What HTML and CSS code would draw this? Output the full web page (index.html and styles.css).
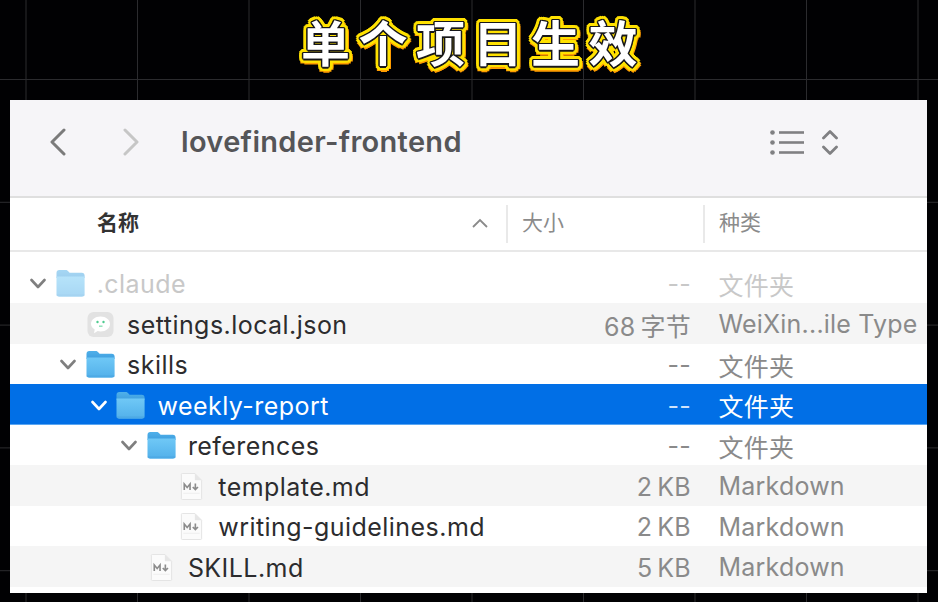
FILE: index.html
```html
<!DOCTYPE html>
<html lang="zh-CN">
<head>
    <meta charset="UTF-8">
    <title>单个项目生效</title>
    <link rel="stylesheet" href="styles.css">
</head>
<body>
    <svg class="defs" width="0" height="0">
        <defs>
            <linearGradient id="folderBack" x1="0" y1="0" x2="0" y2="1">
                <stop offset="0" stop-color="#4fb0ea"/>
                <stop offset="1" stop-color="#3f9fdf"/>
            </linearGradient>
            <linearGradient id="folderFront" x1="0" y1="0" x2="0" y2="1">
                <stop offset="0" stop-color="#6fc8f6"/>
                <stop offset="1" stop-color="#52b0ea"/>
            </linearGradient>
            <symbol id="folder" viewBox="0 0 29 27">
                <path d="M0.5 3C0.5 1.2 1.6 0 3.2 0H9.6C10.8 0 11.4 0.4 12.2 1.2L13.6 2.8H25.8C27.6 2.8 28.6 3.9 28.6 5.6V8H0.5Z" fill="url(#folderBack)"/>
                <path d="M0.5 6.6H28.6V24C28.6 25.8 27.6 26.8 25.8 26.8H3.2C1.6 26.8 0.5 25.8 0.5 24Z" fill="url(#folderFront)"/>
                <rect x="0.5" y="24.6" width="28.1" height="1" fill="#3f9ad8" opacity="0.55"/>
            </symbol>
            <symbol id="mdfile" viewBox="0 0 23 28">
                <path d="M1 1.5C1 0.9 1.4 0.5 2 0.5H15L22 7.5V26.5C22 27.1 21.6 27.5 21 27.5H2C1.4 27.5 1 27.1 1 26.5Z" fill="#fbfbfb" stroke="#e3e3e3"/>
                <path d="M15 0.5V7.5H22Z" fill="#e6e6e6"/>
                <path d="M4 17.5V11.5L7 15L10 11.5V17.5" fill="none" stroke="#8c8c8c" stroke-width="1.7"/>
                <path d="M15.5 11V17M12.8 14.5L15.5 17.3L18.2 14.5" fill="none" stroke="#8c8c8c" stroke-width="1.7"/>
                <rect x="3" y="20.5" width="17" height="1" fill="#eeeeee"/>
            </symbol>
            <symbol id="chevron" viewBox="0 0 16 11">
                <path d="M1.5 2L8 9L14.5 2" fill="none" stroke="currentColor" stroke-width="2.6" stroke-linecap="round" stroke-linejoin="round"/>
            </symbol>
        </defs>
    </svg>

    <h1 class="banner">单个项目生效</h1>

    <div class="finder">
        <div class="toolbar">
            <svg class="nav back" width="17" height="28" viewBox="0 0 17 28"><path d="M15 2L3 14L15 26"/></svg>
            <svg class="nav forward" width="17" height="28" viewBox="0 0 17 28"><path d="M2 2L14 14L2 26"/></svg>
            <div class="path-title">lovefinder-frontend</div>
            <svg class="view-list" width="34" height="25" viewBox="0 0 34 25">
                <circle cx="2.5" cy="2.5" r="2.3"/>
                <circle cx="2.5" cy="12.5" r="2.3"/>
                <circle cx="2.5" cy="22.5" r="2.3"/>
                <rect x="9" y="1.2" width="25" height="2.6"/>
                <rect x="9" y="11.2" width="25" height="2.6"/>
                <rect x="9" y="21.2" width="25" height="2.6"/>
            </svg>
            <svg class="view-sort" width="16" height="25" viewBox="0 0 16 25"><path d="M1.5 8L8 1.5L14.5 8M1.5 17L8 23.5L14.5 17"/></svg>
        </div>

        <div class="columns">
            <div class="col-name">
                <span>名称</span>
                <svg class="sort-arrow" width="16" height="10" viewBox="0 0 16 10"><path d="M1 9L8 2L15 9"/></svg>
            </div>
            <div class="col-head">大小</div>
            <div class="col-head">种类</div>
        </div>

        <div class="file-list">
            <div class="row dimmed level-0">
                <div class="name">
                    <svg class="twisty"><use href="#chevron"/></svg>
                    <svg class="icon"><use href="#folder"/></svg>
                    <span>.claude</span>
                </div>
                <div class="size">--</div>
                <div class="kind">文件夹</div>
            </div>
            <div class="row striped level-1">
                <div class="name">
                    <span class="twisty"></span>
                    <svg class="icon" viewBox="0 0 29 27">
                        <rect x="1.5" y="1" width="26" height="25" rx="6" fill="#e2e2e2"/>
                        <path d="M14.5 5.5C20 5.5 24 8.8 24 13C24 17.2 20 20.5 14.5 20.5C13.5 20.5 12.6 20.4 11.7 20.1L8 22.2L8.7 18.4C6.3 17 5 15.1 5 13C5 8.8 9 5.5 14.5 5.5Z" fill="#ffffff"/>
                        <circle cx="11.5" cy="11" r="1.2" fill="#4ecb8f"/>
                        <circle cx="17.5" cy="11" r="1.2" fill="#4ecb8f"/>
                        <rect x="13" y="14.6" width="3.5" height="1.1" fill="#6ad6a2"/>
                    </svg>
                    <span>settings.local.json</span>
                </div>
                <div class="size">68 字节</div>
                <div class="kind">WeiXin...ile Type</div>
            </div>
            <div class="row level-1">
                <div class="name">
                    <svg class="twisty"><use href="#chevron"/></svg>
                    <svg class="icon"><use href="#folder"/></svg>
                    <span>skills</span>
                </div>
                <div class="size">--</div>
                <div class="kind">文件夹</div>
            </div>
            <div class="row selected level-2">
                <div class="name">
                    <svg class="twisty"><use href="#chevron"/></svg>
                    <svg class="icon"><use href="#folder"/></svg>
                    <span>weekly-report</span>
                </div>
                <div class="size">--</div>
                <div class="kind">文件夹</div>
            </div>
            <div class="row level-3">
                <div class="name">
                    <svg class="twisty"><use href="#chevron"/></svg>
                    <svg class="icon"><use href="#folder"/></svg>
                    <span>references</span>
                </div>
                <div class="size">--</div>
                <div class="kind">文件夹</div>
            </div>
            <div class="row striped level-4">
                <div class="name">
                    <span class="twisty"></span>
                    <svg class="icon"><use href="#mdfile"/></svg>
                    <span>template.md</span>
                </div>
                <div class="size">2 KB</div>
                <div class="kind">Markdown</div>
            </div>
            <div class="row level-4">
                <div class="name">
                    <span class="twisty"></span>
                    <svg class="icon"><use href="#mdfile"/></svg>
                    <span>writing-guidelines.md</span>
                </div>
                <div class="size">2 KB</div>
                <div class="kind">Markdown</div>
            </div>
            <div class="row striped level-3">
                <div class="name">
                    <span class="twisty"></span>
                    <svg class="icon"><use href="#mdfile"/></svg>
                    <span>SKILL.md</span>
                </div>
                <div class="size">5 KB</div>
                <div class="kind">Markdown</div>
            </div>
        </div>
    </div>
</body>
</html>
```

FILE: styles.css
```css
* {
    margin: 0;
    padding: 0;
    box-sizing: border-box;
}

body {
    width: 938px;
    height: 602px;
    overflow: hidden;
    font-family: Inter, "Noto Sans CJK SC", sans-serif;
    background-color: #010103;
    background-image:
        linear-gradient(to right, #2b2b2e 1.2px, transparent 1.2px),
        linear-gradient(to bottom, #2b2b2e 1.2px, transparent 1.2px);
    background-size: 111.5px 122.8px;
    background-position: 25.5px 79px;
}

.defs {
    position: absolute;
}

.banner {
    height: 100px;
    padding: 15px 0 0 9px;
    text-align: center;
    font-family: "Noto Sans CJK SC", sans-serif;
    font-size: 49px;
    font-weight: 700;
    line-height: 52px;
    letter-spacing: 8.5px;
    color: #ffffff;
    /* dark ring first so it sits on top, then yellow, then the orange drop */
    text-shadow:
        1.5px 0 0 #17171a, -1.5px 0 0 #17171a, 0 1.5px 0 #17171a, 0 -1.5px 0 #17171a,
        1px 1px 0 #17171a, -1px 1px 0 #17171a, 1px -1px 0 #17171a, -1px -1px 0 #17171a,
        4px 0 0 #ffe100, -4px 0 0 #ffe100, 0 4px 0 #ffe100, 0 -4px 0 #ffe100,
        3px 3px 0 #ffe100, -3px 3px 0 #ffe100, 3px -3px 0 #ffe100, -3px -3px 0 #ffe100,
        2px 4px 0 #ffe100, -2px 4px 0 #ffe100, 4px 2px 0 #ffe100, -4px 2px 0 #ffe100,
        2px -4px 0 #ffe100, -2px -4px 0 #ffe100, 4px -2px 0 #ffe100, -4px -2px 0 #ffe100,
        5px 3px 0 #ff9d00, -3px 5px 0 #ff9d00, 3px 5px 0 #ff9d00, 1px 6px 0 #ff9d00, 5px 1px 0 #ff9d00;
}

.finder {
    width: 916.5px;
    height: 493px;
    margin-left: 10px;
    background: #ffffff;
}

.toolbar {
    height: 98px;
    padding: 0 89px 12px 39px;
    display: flex;
    align-items: center;
    background: #f6f5f8;
    border-bottom: 2px solid #dfdfdf;
}

.nav {
    fill: none;
    stroke-width: 3;
    stroke-linecap: round;
    stroke-linejoin: round;
}

.back {
    stroke: #7b7b7b;
    margin-right: 57px;
}

.forward {
    stroke: #c6c6c6;
    margin-right: 41px;
}

.path-title {
    flex: 1;
    margin-bottom: 1px;
    font-size: 29px;
    font-weight: 600;
    letter-spacing: 0.32px;
    color: #555558;
}

.view-list {
    fill: #808083;
    margin-right: 18px;
}

.view-sort {
    fill: none;
    stroke: #808083;
    stroke-width: 2.8;
    stroke-linecap: round;
    stroke-linejoin: round;
}

.columns {
    height: 54px;
    display: grid;
    grid-template-columns: 496px 197px 1fr;
    align-items: center;
    border-bottom: 2px solid #e8e8e8;
}

.col-name {
    padding: 0 18px 6px 87px;
    display: flex;
    justify-content: space-between;
    align-items: center;
    font-family: "Noto Sans CJK SC", sans-serif;
    font-size: 21px;
    font-weight: 700;
    color: #333333;
}

.sort-arrow {
    margin-top: 4px;
    fill: none;
    stroke: #8a8a8a;
    stroke-width: 1.8;
}

.col-head {
    height: 38px;
    padding-left: 14px;
    border-left: 2px solid #e9e9e9;
    font-family: "Noto Sans CJK SC", sans-serif;
    font-size: 21px;
    line-height: 32px;
    color: #8b8b8b;
}

.file-list {
    padding-top: 10.8px;
}

.row {
    height: 40.5px;
    padding-top: 2px;
    display: grid;
    grid-template-columns: 496px 197px 1fr;
    align-items: center;
    font-size: 25px;
    color: #2c2c2e;
}

.striped {
    background: #f5f5f5;
}

.name {
    display: flex;
    align-items: center;
    letter-spacing: 0.45px;
}

.level-0 .name { padding-left: 20px; }
.level-1 .name { padding-left: 50.4px; }
.level-2 .name { padding-left: 80.8px; }
.level-3 .name { padding-left: 111.2px; }
.level-4 .name { padding-left: 141.6px; }

.twisty {
    width: 16px;
    height: 11px;
    margin: -1px 9.7px 0 0;
    flex-shrink: 0;
    color: #7f7f7f;
}

.icon {
    width: 29px;
    height: 27px;
    margin: -1px 12px 0 0;
    flex-shrink: 0;
    overflow: visible;
}

.size {
    padding-right: 12px;
    text-align: right;
    letter-spacing: 0.3px;
    word-spacing: -2.5px;
    color: #8a8a8a;
}

.kind {
    padding-left: 15.5px;
    white-space: nowrap;
    letter-spacing: 0.2px;
    color: #8a8a8a;
    margin-top: -1px;
}

.dimmed .name span,
.dimmed .size,
.dimmed .kind {
    color: #c8c8c8;
}

.dimmed .icon {
    opacity: 0.5;
}

.selected {
    background: #016fe6;
    box-shadow: inset 0 -1px 0 #5aa6f2;
}

.selected .name,
.selected .size,
.selected .kind,
.selected .twisty {
    color: #ffffff;
}

.selected .size {
    color: #cfe3fb;
}
```
